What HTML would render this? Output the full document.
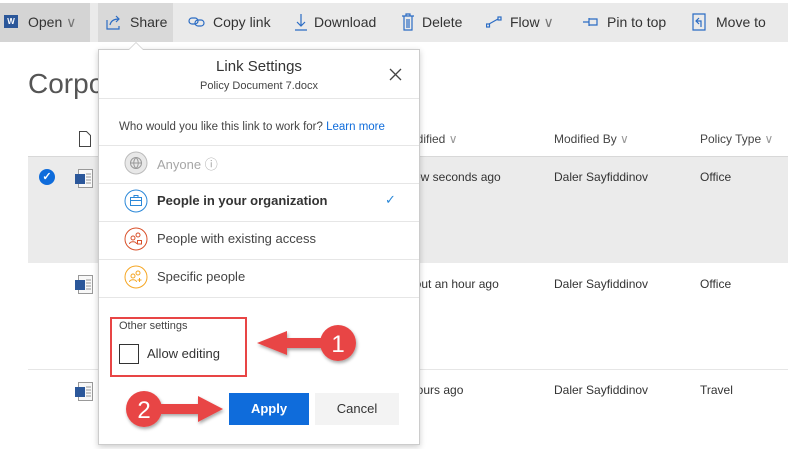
<!DOCTYPE html>
<html><head><meta charset="utf-8"><style>
*{margin:0;padding:0;box-sizing:border-box}
body{width:788px;height:449px;overflow:hidden;background:#fff;font-family:"Segoe UI","Liberation Sans",sans-serif;color:#333;position:relative}
.a{position:absolute;white-space:nowrap}
.tb{left:0;top:3px;width:788px;height:39px;background:#eaeaea}
.ti{font-size:14px;color:#333;top:14px}
.hd{font-size:12px;color:#444;top:132px}
.cell{font-size:12px;color:#333}
.line{height:1px;background:#e6e6e6}
.doc{width:16px;height:18px;border:1px solid #999;background:#f8f8f8}
.docw{width:9px;height:9px;background:#2b579a}
</style></head><body>
<div class="a tb"></div>
<div class="a" style="left:0;top:3px;width:90px;height:39px;background:#d4d4d4"></div>
<div class="a" style="left:98px;top:3px;width:75px;height:39px;background:#d9d9d9"></div>
<div class="a" style="left:4px;top:15px;width:14px;height:13px;background:#2b579a;color:#fff;font-size:8px;font-weight:bold;text-align:center;line-height:13px">W</div>
<div class="a ti" style="left:28px">Open <span style="color:#777">∨</span></div>
<svg class="a" style="left:106px;top:14px" width="16" height="16" fill="none" stroke="#2b6cc4" stroke-width="1.2"><path d="M1 6v9h12v-3M4 11c1-5 5-6 9-6M10 2l3 3-3 3"/></svg>
<div class="a ti" style="left:130px">Share</div>
<svg class="a" style="left:188px;top:16px" width="18" height="12" fill="none" stroke="#2b6cc4" stroke-width="1.2"><rect x="1" y="2" width="9" height="6" rx="3"/><rect x="7" y="4" width="9" height="6" rx="3"/></svg>
<div class="a ti" style="left:213px">Copy link</div>
<svg class="a" style="left:294px;top:13px" width="14" height="18" fill="none" stroke="#2b6cc4" stroke-width="1.2"><path d="M7 1v12M3 9l4 4 4-4M1 17h12"/></svg>
<div class="a ti" style="left:314px">Download</div>
<svg class="a" style="left:402px;top:13px" width="12" height="18" fill="none" stroke="#2b6cc4" stroke-width="1.2"><path d="M0 3h12M4 3V1h4v2M2 3v14h8V3M5 6v9M7 6v9"/></svg>
<div class="a ti" style="left:422px">Delete</div>
<svg class="a" style="left:486px;top:16px" width="16" height="12" fill="none" stroke="#2b6cc4" stroke-width="1.2"><rect x="0.5" y="8" width="3" height="3"/><rect x="12" y="1" width="3" height="3"/><path d="M3 8l9-5"/></svg>
<div class="a ti" style="left:510px">Flow <span style="color:#777">∨</span></div>
<svg class="a" style="left:583px;top:16px" width="18" height="12" fill="none" stroke="#2b6cc4" stroke-width="1.2"><path d="M0 6h6M6 2v8M6 3h8v6H6M14 3v6"/></svg>
<div class="a ti" style="left:607px">Pin to top</div>
<svg class="a" style="left:692px;top:13px" width="14" height="18" fill="none" stroke="#2b6cc4" stroke-width="1.2"><path d="M1 1h12v16H1zM7 5l-3 3 3 3M4 8h5v6"/></svg>
<div class="a ti" style="left:716px">Move to</div>

<div class="a" style="left:28px;top:68px;font-size:28px;font-weight:300;color:#555">Corporate</div>
<svg class="a" style="left:79px;top:131px" width="12" height="16" fill="none" stroke="#444"><path d="M.5.5h7l4 4v11H.5z"/></svg>
<div class="a hd" style="left:400px">Modified <span style="color:#999">∨</span></div>
<div class="a hd" style="left:554px">Modified By <span style="color:#999">∨</span></div>
<div class="a hd" style="left:700px">Policy Type <span style="color:#999">∨</span></div>
<div class="a" style="left:28px;top:156px;width:760px;height:1px;background:#d8d8d8"></div>
<div class="a" style="left:28px;top:157px;width:760px;height:106px;background:#ebebeb"></div>
<div class="a" style="left:39px;top:169px;width:16px;height:16px;border-radius:50%;background:#0f6cdb;color:#fff;font-size:11px;text-align:center;line-height:16px;font-weight:bold">✓</div>
<div class="a cell" style="left:400px;top:170px">A few seconds ago</div>
<div class="a cell" style="left:554px;top:170px">Daler Sayfiddinov</div>
<div class="a cell" style="left:700px;top:170px">Office</div>
<div class="a cell" style="left:400px;top:277px">About an hour ago</div>
<div class="a cell" style="left:554px;top:277px">Daler Sayfiddinov</div>
<div class="a cell" style="left:700px;top:277px">Office</div>
<div class="a line" style="left:28px;top:369px;width:760px"></div>
<div class="a cell" style="left:400px;top:383px">2 hours ago</div>
<div class="a cell" style="left:554px;top:383px">Daler Sayfiddinov</div>
<div class="a cell" style="left:700px;top:383px">Travel</div>
<svg class="a" style="left:75px;top:169px" width="18" height="20"><rect x="3.5" y=".5" width="14" height="18" fill="#f8f8f8" stroke="#999"/><path d="M11 5h5M11 8h5M11 11h5M11 14h5" stroke="#999"/><rect x="0" y="5" width="10" height="10" fill="#2b579a"/></svg>
<svg class="a" style="left:75px;top:275px" width="18" height="20"><rect x="3.5" y=".5" width="14" height="18" fill="#f8f8f8" stroke="#999"/><path d="M11 5h5M11 8h5M11 11h5M11 14h5" stroke="#999"/><rect x="0" y="5" width="10" height="10" fill="#2b579a"/></svg>
<svg class="a" style="left:75px;top:382px" width="18" height="20"><rect x="3.5" y=".5" width="14" height="18" fill="#f8f8f8" stroke="#999"/><path d="M11 5h5M11 8h5M11 11h5M11 14h5" stroke="#999"/><rect x="0" y="5" width="10" height="10" fill="#2b579a"/></svg>

<!-- popup -->
<div class="a" style="left:98px;top:49px;width:322px;height:396px;background:#fff;border:1px solid #ccc;box-shadow:0 2px 6px rgba(0,0,0,.2)"></div>
<div class="a" style="left:128px;top:42px;width:0;height:0;border-left:8px solid transparent;border-right:8px solid transparent;border-bottom:8px solid #ccc"></div>
<div class="a" style="left:129px;top:43px;width:0;height:0;border-left:7px solid transparent;border-right:7px solid transparent;border-bottom:7px solid #fff"></div>
<div class="a" style="left:99px;top:58px;width:320px;text-align:center;font-size:15px;color:#333">Link Settings</div>
<div class="a" style="left:99px;top:80px;width:320px;text-align:center;font-size:11px;color:#444">Policy Document 7.docx</div>
<svg class="a" style="left:389px;top:68px" width="13" height="13" stroke="#444" stroke-width="1.3"><path d="M1 1l11 11M12 1L1 12"/></svg>
<div class="a line" style="left:99px;top:98px;width:320px"></div>
<div class="a" style="left:119px;top:121px;font-size:11.5px;color:#444">Who would you like this link to work for? <span style="color:#0f6cdb">Learn more</span></div>
<div class="a line" style="left:99px;top:145px;width:320px"></div>
<div class="a line" style="left:99px;top:183px;width:320px"></div>
<div class="a line" style="left:99px;top:221px;width:320px"></div>
<div class="a line" style="left:99px;top:259px;width:320px"></div>
<div class="a line" style="left:99px;top:297px;width:320px"></div>
<svg class="a" style="left:124px;top:151px" width="24" height="24" fill="none"><circle cx="12" cy="12" r="11" fill="#e8e8e8" stroke="#bbb"/><circle cx="12" cy="12" r="5.5" stroke="#999"/><path d="M6.5 12h11M12 6.5c-3 3-3 8 0 11M12 6.5c3 3 3 8 0 11" stroke="#999"/></svg>
<div class="a" style="left:157px;top:154px;font-size:13px;color:#a6a6a6">Anyone ⓘ</div>
<svg class="a" style="left:124px;top:189px" width="24" height="24" fill="none" stroke="#2b88d8"><circle cx="12" cy="12" r="11"/><rect x="6.5" y="8.5" width="11" height="8"/><path d="M10 8.5v-2h4v2M6.5 11.5h11"/></svg>
<div class="a" style="left:157px;top:193px;font-size:13px;font-weight:bold;color:#333">People in your organization</div>
<div class="a" style="left:385px;top:192px;font-size:13px;color:#2b88d8">✓</div>
<svg class="a" style="left:124px;top:227px" width="24" height="24" fill="none" stroke="#d9502a"><circle cx="12" cy="12" r="11"/><circle cx="9" cy="11" r="2"/><path d="M5.5 17c0-3 7-3 7 0"/><circle cx="14" cy="8" r="2"/><rect x="13.5" y="13.5" width="4" height="3.5"/></svg>
<div class="a" style="left:157px;top:231px;font-size:13px;color:#444">People with existing access</div>
<svg class="a" style="left:124px;top:265px" width="24" height="24" fill="none" stroke="#f5a623"><circle cx="12" cy="12" r="11"/><circle cx="9" cy="11" r="2"/><path d="M5.5 17c0-3 7-3 7 0"/><circle cx="14" cy="8" r="2"/><path d="M15.5 13v4M13.5 15h4"/></svg>
<div class="a" style="left:157px;top:269px;font-size:13px;color:#444">Specific people</div>

<div class="a" style="left:110px;top:317px;width:137px;height:60px;border:2px solid #e84545"></div>
<div class="a" style="left:119px;top:320px;font-size:11px;color:#444">Other settings</div>
<div class="a" style="left:119px;top:344px;width:20px;height:20px;border:1px solid #333"></div>
<div class="a" style="left:147px;top:346px;font-size:13px;color:#333">Allow editing</div>
<div class="a" style="left:229px;top:393px;width:80px;height:32px;background:#0f6cdb;color:#fff;font-size:13px;font-weight:bold;text-align:center;line-height:32px">Apply</div>
<div class="a" style="left:315px;top:393px;width:84px;height:32px;background:#f3f3f3;color:#333;font-size:13px;text-align:center;line-height:32px">Cancel</div>

<svg class="a" style="left:120px;top:320px" width="250" height="115">
<defs><filter id="s"><feDropShadow dx="1" dy="2" stdDeviation="1.5" flood-opacity=".35"/></filter></defs>
<g filter="url(#s)" fill="#e84545">
<path d="M137 23l30-12v7h40v10h-40v7z"/>
<circle cx="218" cy="23" r="18"/>
<path d="M40 84h38v-8l25 13-25 13v-8H40z"/>
<circle cx="24" cy="89" r="18"/>
</g>
<text x="218" y="32" fill="#fff" font-size="24" text-anchor="middle" font-family="Liberation Sans">1</text>
<text x="24" y="98" fill="#fff" font-size="24" text-anchor="middle" font-family="Liberation Sans">2</text>
</svg>
</body></html>
